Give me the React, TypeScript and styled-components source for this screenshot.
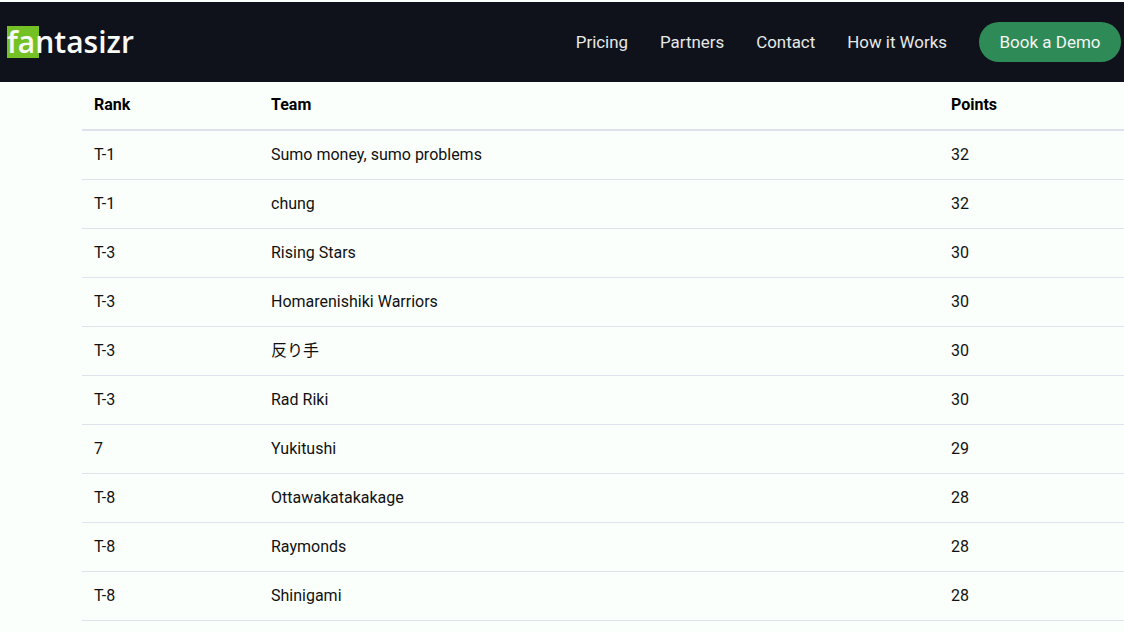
import React from 'react';
import styled, { createGlobalStyle } from 'styled-components';

const GlobalStyle = createGlobalStyle`
  html, body {
    margin: 0;
    padding: 0;
    background: #fbfffb;
    overflow: hidden;
  }
  body {
    font-family: 'Roboto', 'Noto Sans CJK JP', sans-serif;
    line-height: 1.5;
  }
`;

const Page = styled.div`
  width: 1124px;
  height: 632px;
  overflow: hidden;
  padding-top: 2px;
  box-sizing: border-box;
  background: #fbfffb;
`;

const Nav = styled.nav`
  height: 80px;
  background: #10121b;
  display: flex;
  align-items: center;
  justify-content: space-between;
  padding: 0 3px 0 7px;
`;

const Logo = styled.div`
  position: relative;
  height: 32px;
  display: flex;
  align-items: center;
  font-family: 'Open Sans', sans-serif;
  font-size: 30px;
  font-weight: 600;
  line-height: 32px;
  color: #f8faf8;
  z-index: 0;

  &::before {
    content: '';
    position: absolute;
    left: 0;
    top: 0;
    width: 32px;
    height: 32px;
    background: #74c125;
    z-index: -1;
  }
`;

const NavLinks = styled.div`
  display: flex;
  align-items: center;
  gap: 32px;
`;

const NavLink = styled.a`
  font-size: 16.9px;
  line-height: 26px;
  color: #e5e9e8;
  text-decoration: none;
`;

const DemoButton = styled.button`
  height: 40px;
  width: 142px;
  padding: 0;
  border: none;
  border-radius: 20px;
  background: #2e8b57;
  color: #f4f6f4;
  font-family: 'Roboto', sans-serif;
  font-size: 17px;
`;

const TableWrap = styled.div`
  padding-left: 82px;
`;

const Table = styled.table`
  width: 1042px;
  table-layout: fixed;
  border-collapse: collapse;
  font-size: 16px;
  color: #111;
`;

const HeadCell = styled.th<{ $width: number }>`
  width: ${p => p.$width}px;
  box-sizing: border-box;
  padding: 11px 12px 12px;
  text-align: left;
  font-weight: 700;
  color: #000;
  border-bottom: 2px solid #dee2ea;
`;

const Cell = styled.td`
  padding: 12px;
  border-bottom: 1px solid #dee2ea;
`;

const LINKS = ['Pricing', 'Partners', 'Contact', 'How it Works'];

const ROWS = [
  ['T-1', 'Sumo money, sumo problems', '32'],
  ['T-1', 'chung', '32'],
  ['T-3', 'Rising Stars', '30'],
  ['T-3', 'Homarenishiki Warriors', '30'],
  ['T-3', '反り手', '30'],
  ['T-3', 'Rad Riki', '30'],
  ['7', 'Yukitushi', '29'],
  ['T-8', 'Ottawakatakakage', '28'],
  ['T-8', 'Raymonds', '28'],
  ['T-8', 'Shinigami', '28'],
];

export default function App() {
  return (
    <Page>
      <GlobalStyle />
      <Nav>
        <Logo>fantasizr</Logo>
        <NavLinks>
          {LINKS.map(l => <NavLink key={l}>{l}</NavLink>)}
          <DemoButton>Book a Demo</DemoButton>
        </NavLinks>
      </Nav>
      <TableWrap>
        <Table>
          <thead>
            <tr>
              <HeadCell $width={177}>Rank</HeadCell>
              <HeadCell $width={680}>Team</HeadCell>
              <HeadCell $width={185}>Points</HeadCell>
            </tr>
          </thead>
          <tbody>
            {ROWS.map((r, i) => (
              <tr key={i}>
                {r.map((c, j) => <Cell key={j}>{c}</Cell>)}
              </tr>
            ))}
          </tbody>
        </Table>
      </TableWrap>
    </Page>
  );
}
